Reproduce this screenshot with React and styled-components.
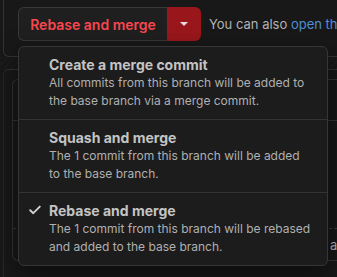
import styled, { createGlobalStyle } from 'styled-components';

const GlobalStyle = createGlobalStyle`
  html, body {
    margin: 0;
    padding: 0;
    background: #181818;
  }
  body {
    font-family: Inter, "Noto Sans", "Liberation Sans", sans-serif;
    -webkit-font-smoothing: antialiased;
  }
`;

const options = [
  {
    title: 'Create a merge commit',
    text: 'All commits from this branch will be added to the base branch via a merge commit.',
  },
  {
    title: 'Squash and merge',
    text: 'The 1 commit from this branch will be added to the base branch.',
  },
  {
    title: 'Rebase and merge',
    text: 'The 1 commit from this branch will be rebased and added to the base branch.',
    selected: true,
  },
];

const App = () => {
  return (
    <>
      <GlobalStyle />
      <Page>
        <MergeBox>
          <ActionRow>
            <ButtonGroup>
              <MainButton>Rebase and merge</MainButton>
              <CaretButton aria-label="Select merge method">
                <Caret />
              </CaretButton>
            </ButtonGroup>
            <Hint>
              You can also <a>open this</a>
            </Hint>
          </ActionRow>
        </MergeBox>
        <Hatch />
        <OuterBox>
          <InnerBox>
            <BoxHeader />
            <DashedRow />
            <BoxText>as</BoxText>
          </InnerBox>
        </OuterBox>

        <Menu>
          {options.map((opt) => (
            <MenuItem key={opt.title}>
              <Check>
                {opt.selected && (
                  <svg width="12" height="10" viewBox="0 0 12 10">
                    <path d="M1.2 5.2 L4.3 8.2 L10.8 1.6" fill="none" stroke="#cfcfcf" strokeWidth="1.9" strokeLinecap="round" strokeLinejoin="round" />
                  </svg>
                )}
              </Check>
              <ItemBody>
                <ItemTitle>{opt.title}</ItemTitle>
                <ItemText>{opt.text}</ItemText>
              </ItemBody>
            </MenuItem>
          ))}
        </Menu>
      </Page>
    </>
  );
};

const Page = styled.div`
  position: relative;
  width: 337px;
  height: 277px;
  overflow: hidden;
  background: #181818;
`;

const MergeBox = styled.div`
  margin-left: 3px;
  margin-top: -20px;
  padding: 27px 0 15px 14px;
  border-left: 1px solid #333333;
  border-bottom: 1px solid #333333;
  border-bottom-left-radius: 6px;
`;

const ActionRow = styled.div`
  display: flex;
  align-items: center;
  gap: 8px;
  height: 34px;
`;

const ButtonGroup = styled.div`
  display: flex;
  height: 34px;
  flex-shrink: 0;
`;

const MainButton = styled.button`
  width: 149px;
  height: 34px;
  padding: 0;
  background: #1f1f1f;
  border: 1px solid #383838;
  border-right: none;
  border-radius: 6px 0 0 6px;
  color: #f8474f;
  font-family: inherit;
  font-size: 14px;
  font-weight: 600;
`;

const CaretButton = styled.button`
  width: 34px;
  height: 34px;
  padding: 0;
  display: flex;
  align-items: center;
  justify-content: center;
  background: #99171b;
  border: none;
  border-radius: 0 6px 6px 0;
`;

const Caret = styled.span`
  width: 0;
  height: 0;
  border-left: 4px solid transparent;
  border-right: 4px solid transparent;
  border-top: 4px solid #e8dede;
`;

const Hint = styled.span`
  white-space: nowrap;
  color: #b3b3b3;
  font-size: 13px;

  a {
    color: #4f8fd6;
  }
`;

const Hatch = styled.div`
  height: 12px;
  background: repeating-linear-gradient(135deg, #1c1c1c 0 2px, #181818 2px 5px);
`;

const OuterBox = styled.div`
  margin-left: 3px;
  height: 200px;
  border-left: 1px solid #272727;
  border-top: 1px solid #333333;
  border-top-left-radius: 6px;
  padding: 9px 0 0 8px;
`;

const InnerBox = styled.div`
  height: 180px;
  border: 1px solid #333333;
  border-right: none;
  border-radius: 6px 0 0 6px;
  display: flex;
  flex-direction: column;
`;

const BoxHeader = styled.div`
  height: 40px;
  border-bottom: 1px solid #333333;
`;

const DashedRow = styled.div`
  margin-top: 107px;
  border-top: 1px dashed #3a3a3a;
`;

const BoxText = styled.div`
  padding: 8px 0 0 317px;
  white-space: nowrap;
  color: #b3b3b3;
  font-size: 13px;
`;

const Menu = styled.div`
  position: absolute;
  left: 18px;
  top: 46px;
  width: 310px;
  box-sizing: border-box;
  background: #1c1c1c;
  border: 1px solid #363636;
  border-radius: 6px;
  box-shadow: 0 8px 24px rgba(0, 0, 0, 0.5);
  overflow: hidden;
`;

const MenuItem = styled.div`
  display: flex;
  padding: 9px 16px 9px 10px;
  border-top: 1px solid #333333;

  &:first-child {
    border-top: none;
  }
`;

const Check = styled.div`
  width: 20px;
  flex-shrink: 0;
  padding-top: 3px;

  svg {
    display: block;
  }
`;

const ItemBody = styled.div`
  display: flex;
  flex-direction: column;
`;

const ItemTitle = styled.div`
  color: #c4c4c4;
  font-size: 14px;
  font-weight: 700;
  line-height: 18px;
`;

const ItemText = styled.div`
  color: #b0b0b0;
  font-size: 12px;
  line-height: 18px;
`;

export default App;
